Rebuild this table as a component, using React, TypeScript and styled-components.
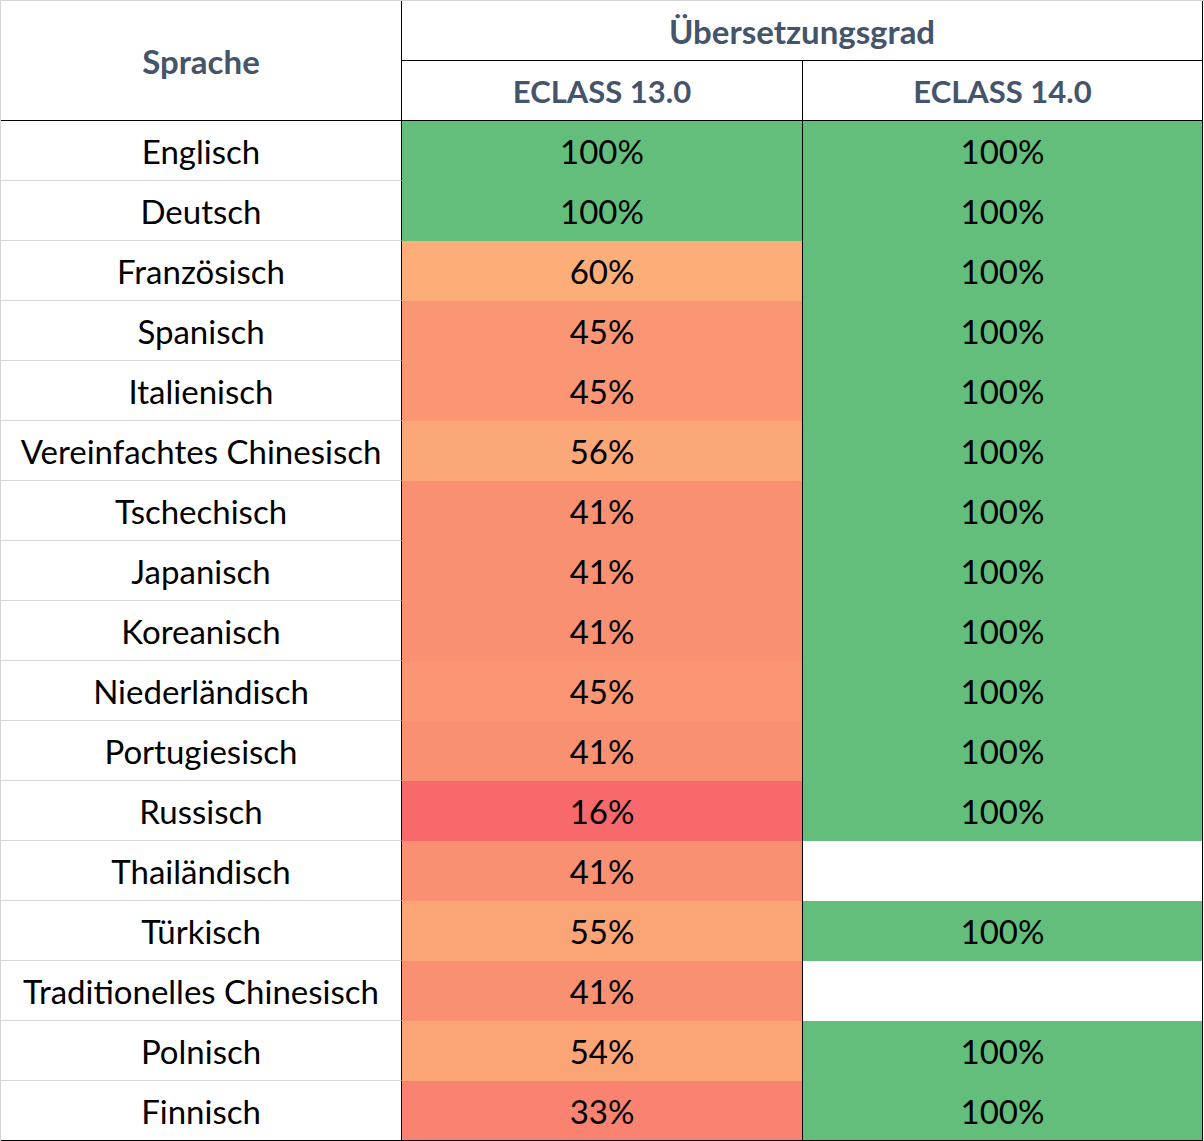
import React, { FC } from 'react';
import styled, { createGlobalStyle } from 'styled-components';

const GlobalStyle = createGlobalStyle`
  html, body {
    margin: 0;
    padding: 0;
    background: #ffffff;
  }
  body {
    font-family: Lato, "Open Sans", sans-serif;
  }
`;

const GREEN = '#63be7b';

type Row = {
  language: string;
  v13: number;
  v14: number | null;
};

const rows: Row[] = [
  { language: 'Englisch', v13: 100, v14: 100 },
  { language: 'Deutsch', v13: 100, v14: 100 },
  { language: 'Französisch', v13: 60, v14: 100 },
  { language: 'Spanisch', v13: 45, v14: 100 },
  { language: 'Italienisch', v13: 45, v14: 100 },
  { language: 'Vereinfachtes Chinesisch', v13: 56, v14: 100 },
  { language: 'Tschechisch', v13: 41, v14: 100 },
  { language: 'Japanisch', v13: 41, v14: 100 },
  { language: 'Koreanisch', v13: 41, v14: 100 },
  { language: 'Niederländisch', v13: 45, v14: 100 },
  { language: 'Portugiesisch', v13: 41, v14: 100 },
  { language: 'Russisch', v13: 16, v14: 100 },
  { language: 'Thailändisch', v13: 41, v14: null },
  { language: 'Türkisch', v13: 55, v14: 100 },
  { language: 'Traditionelles Chinesisch', v13: 41, v14: null },
  { language: 'Polnisch', v13: 54, v14: 100 },
  { language: 'Finnisch', v13: 33, v14: 100 },
];

// Excel-like colour scale: red (min) -> yellow -> green (100)
const scaleColor = (value: number | null): string => {
  if (value === null) return '#ffffff';
  if (value >= 100) return GREEN;
  const min = 16;
  const t = Math.max(0, Math.min(1, (value - min) / (100 - min)));
  const r = Math.round(248 + t * (255 - 248));
  const g = Math.round(105 + t * (235 - 105));
  const b = Math.round(107 + t * (132 - 107));
  return `rgb(${r}, ${g}, ${b})`;
};

const Page = styled.div`
  width: 1204px;
  height: 1141px;
  background: #ffffff;
`;

const Grid = styled.div`
  display: grid;
  grid-template-columns: 401px 401px 400px;
  grid-auto-rows: 60px;
  width: 1203px;
  border-top: 1px solid #d4d4d4;
  border-left: 1px solid #d4d4d4;
`;

const Cell = styled.div<{ $bg?: string; $grayBottom?: boolean; $last?: boolean }>`
  box-sizing: border-box;
  display: flex;
  align-items: center;
  justify-content: center;
  padding-top: 0;
  border-right: 1px solid #000000;
  border-bottom: ${(p) =>
    p.$last ? '1px solid #000000' : p.$grayBottom ? '1px solid #d9d9d9' : 'none'};
  background: ${(p) => p.$bg ?? '#ffffff'};
  font-size: 33px;
  color: #000000;
  white-space: nowrap;
`;

const HeadCell = styled.div<{ $rowSpan?: number; $colSpan?: number; $size?: number }>`
  box-sizing: border-box;
  display: flex;
  align-items: center;
  justify-content: center;
  padding-top: 0;
  grid-row: ${(p) => (p.$rowSpan ? `span ${p.$rowSpan}` : 'auto')};
  grid-column: ${(p) => (p.$colSpan ? `span ${p.$colSpan}` : 'auto')};
  border-right: 1px solid #000000;
  border-bottom: 1px solid #000000;
  font-size: ${(p) => p.$size ?? 33}px;
  font-weight: 700;
  color: #44546a;
  white-space: nowrap;
`;

const App: FC = () => {
  return (
    <Page>
      <GlobalStyle />
      <Grid>
        <HeadCell $rowSpan={2}>Sprache</HeadCell>
        <HeadCell $colSpan={2}>Übersetzungsgrad</HeadCell>
        <HeadCell $size={31}>ECLASS 13.0</HeadCell>
        <HeadCell $size={31}>ECLASS 14.0</HeadCell>

        {rows.map((row, i) => {
          const last = i === rows.length - 1;
          return (
            <React.Fragment key={row.language}>
              <Cell $grayBottom $last={last}>
                {row.language}
              </Cell>
              <Cell $bg={scaleColor(row.v13)} $last={last}>
                {row.v13}%
              </Cell>
              <Cell $bg={scaleColor(row.v14)} $last={last}>
                {row.v14 !== null ? `${row.v14}%` : ''}
              </Cell>
            </React.Fragment>
          );
        })}
      </Grid>
    </Page>
  );
};

export default App;
